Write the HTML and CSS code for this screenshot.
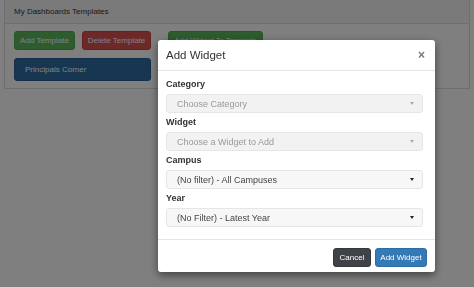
FILE: index.html
```html
<!DOCTYPE html>
<html lang="en">
<head>
  <meta charset="UTF-8">
  <title>My Dashboards Templates</title>
  <link rel="stylesheet" href="styles.css">
</head>
<body>

  <div class="panel">
    <div class="panel-heading">My Dashboards Templates</div>
    <div class="panel-body">
      <div class="btn-row">
        <button class="btn btn-success">Add Template</button>
        <button class="btn btn-danger">Delete Template</button>
        <button class="btn btn-success btn-wide">Add Widget To Template</button>
      </div>
      <button class="btn btn-primary btn-block">Principals Corner</button>
    </div>
  </div>

  <div class="backdrop"></div>

  <!-- Add Widget dialog -->
  <div class="modal">
    <div class="modal-header">
      <h4>Add Widget</h4>
      <span class="close">&times;</span>
    </div>
    <div class="modal-body">
      <label>Category</label>
      <div class="select disabled"><span>Choose Category</span><i class="caret"></i></div>
      <label>Widget</label>
      <div class="select disabled"><span>Choose a Widget to Add</span><i class="caret"></i></div>
      <label>Campus</label>
      <div class="select"><span>(No filter) - All Campuses</span><i class="caret"></i></div>
      <label>Year</label>
      <div class="select"><span>(No Filter) - Latest Year</span><i class="caret"></i></div>
    </div>
    <div class="modal-footer">
      <button class="btn btn-dark">Cancel</button>
      <button class="btn btn-blue">Add Widget</button>
    </div>
  </div>

</body>
</html>
```

FILE: styles.css
```css
* { box-sizing: border-box; margin: 0; padding: 0; }

body {
  font-family: 'Liberation Sans', Arial, sans-serif;
  font-size: 9px;
  color: #333;
  background: #fff;
  padding: 0 4px;
}

/* Page behind the dialog */
.panel {
  border: 1px solid #ddd;
  border-top: none;
  height: 89px;
}

.panel-heading {
  background: #f5f5f5;
  border-bottom: 1px solid #ddd;
  height: 24px;
  padding: 7px 9px 0;
  font-size: 8px;
  color: #333;
}

.panel-body { padding: 7px 9px; }

.btn-row { display: flex; gap: 7px; margin-bottom: 8px; }

.btn {
  border: 1px solid transparent;
  border-radius: 3px;
  font-family: inherit;
  font-size: 8px;
  color: #fff;
  height: 19px;
  padding: 0 4px;
  white-space: nowrap;
}

.btn-success { background: #5cb85c; border-color: #4cae4c; width: 61px; }
.btn-danger { background: #d9534f; border-color: #d43f3a; width: 69px; }
.btn-wide { width: 95px; margin-left: 10px; padding: 0; font-size: 7.6px; }
.btn-primary { background: #2e6da4; border-color: #285e8e; }
.btn-block { width: 137px; height: 23px; text-align: left; padding-left: 10px; }

.backdrop {
  position: fixed;
  inset: 0;
  background: rgba(0, 0, 0, 0.5);
}

/* Dialog */
.modal {
  position: fixed;
  left: 158px;
  top: 40px;
  width: 277px;
  height: 232px;
  background: #fff;
  border-radius: 3px;
  box-shadow: 0 3px 9px rgba(0, 0, 0, 0.5);
}

.modal-header {
  display: flex;
  justify-content: space-between;
  align-items: center;
  height: 31px;
  padding: 0 8px;
  border-bottom: 1px solid #e5e5e5;
}

.modal-header h4 { font-size: 11.5px; font-weight: normal; color: #333; }

.close { font-size: 12px; font-weight: bold; color: #777; margin-right: 2px; }

.modal-body { padding: 8px 12px 4px 8px; }

label {
  display: block;
  font-weight: bold;
  font-size: 9px;
  color: #333;
  height: 15px;
}

.select {
  display: flex;
  justify-content: space-between;
  align-items: center;
  height: 19px;
  margin-bottom: 4px;
  padding: 0 8px 0 10px;
  background: #f7f7f7;
  border: 1px solid #e6e6e6;
  border-radius: 3px;
  color: #444;
  font-size: 9px;
}

.select.disabled { background: #f2f2f2; color: #999; }

.caret {
  width: 0;
  height: 0;
  border-left: 2.5px solid transparent;
  border-right: 2.5px solid transparent;
  border-top: 3px solid #222;
}

.select.disabled .caret { border-top-color: #aaa; }

.modal-footer {
  display: flex;
  justify-content: flex-end;
  gap: 4px;
  border-top: 1px solid #e5e5e5;
  margin-top: 4px;
  padding: 8px 8px 0;
}

.btn-dark { background: #3f4347; border-color: #35393c; width: 38px; height: 19px; padding: 0; }
.btn-blue { background: #337ab7; border-color: #2e6da4; width: 52px; height: 19px; padding: 0; }
```
